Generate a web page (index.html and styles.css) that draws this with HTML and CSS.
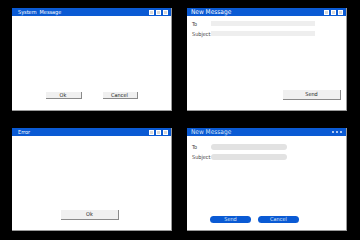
FILE: index.html
```html
<!DOCTYPE html>
<html>
<head>
<meta charset="utf-8">
<link rel="stylesheet" href="styles.css">
</head>
<body>
<div class="grid">
  <div class="win">
    <div class="title"><span class="t">System&nbsp; Message</span><span class="ctl"><i></i><i></i><i></i></span></div>
    <div class="body center-bottom">
      <div class="btnrow">
        <button class="btn w36">Ok</button>
        <button class="btn w35">Cancel</button>
      </div>
    </div>
  </div>
  <div class="win">
    <div class="title"><span class="t big">New Message</span><span class="ctl"><i></i><i></i><i></i></span></div>
    <div class="body form">
      <div class="row"><span class="lbl">To</span><span class="inp"></span></div>
      <div class="row"><span class="lbl">Subject</span><span class="inp"></span></div>
      <div class="spacer"></div>
      <div class="right"><button class="btn send">Send</button></div>
    </div>
  </div>
  <div class="win">
    <div class="title"><span class="t">Error</span><span class="ctl"><i></i><i></i><i></i></span></div>
    <div class="body center-bottom err">
      <button class="btn okbig">Ok</button>
    </div>
  </div>
  <div class="win">
    <div class="title"><span class="t big light">New Message</span><span class="dots"><b></b><b></b><b></b></span></div>
    <div class="body form2">
      <div class="row2"><span class="lbl">To</span><span class="inp2"></span></div>
      <div class="row2"><span class="lbl">Subject</span><span class="inp2"></span></div>
      <div class="spacer"></div>
      <div class="pills"><button class="pill">Send</button><button class="pill">Cancel</button></div>
    </div>
  </div>
</div>
</body>
</html>
```
FILE: styles.css
```css
html, body { margin: 0; padding: 0; background: #000; }
body {
  width: 360px; height: 240px; overflow: hidden;
  font-family: "DejaVu Sans Condensed", sans-serif;
}
.grid {
  display: grid;
  grid-template-columns: 160px 160px;
  grid-template-rows: 103px 103px;
  column-gap: 15px;
  row-gap: 17px;
  padding: 8px 0 0 12px;
}
.win {
  background: #fff;
  display: flex;
  flex-direction: column;
  box-sizing: border-box;
  border-right: 1px solid #9a9a9a;
  border-bottom: 1px solid #9a9a9a;
}
.title {
  height: 8px;
  background: #0a5ad4;
  display: flex;
  align-items: center;
  justify-content: space-between;
  padding: 0 3px 0 6px;
}
.t { color: #fff; font-size: 5.5px; line-height: 8px; }
.t.big { font-size: 6.5px; }
.t.light { color: #dde6f5; }
.title .t.big { margin-left: -2px; }
.ctl { display: flex; gap: 2px; }
.ctl i {
  display: block; width: 3px; height: 3px;
  background: #d8d8d8; border: 0.5px solid #fff;
}
.dots { display: flex; gap: 2px; margin-right: 1px; }
.dots b { display: block; width: 2px; height: 2px; border-radius: 50%; background: #e8eef8; }
.body { flex: 1; display: flex; flex-direction: column; }
.center-bottom { justify-content: flex-end; align-items: center; padding-bottom: 11px; }
.btnrow { display: flex; gap: 21px; }
.btn {
  font-family: inherit; font-size: 5.5px; color: #222;
  background: #f0f0f0; border: none;
  border-right: 1px solid #8a8a8a; border-bottom: 1px solid #8a8a8a;
  padding: 0; margin: 0; height: 7px; line-height: 6px;
  box-sizing: border-box;
}
.w36 { width: 36px; }
.w35 { width: 35px; }
.err { padding-bottom: 10px; align-items: flex-start; padding-left: 49px; }
.okbig { width: 58px; height: 10px; line-height: 9px; }
.form { padding: 5px 5px 10px 5px; }
.row { display: flex; align-items: center; height: 5px; margin-bottom: 5px; }
.lbl { width: 19px; flex-shrink: 0; white-space: nowrap; font-size: 5.5px; color: #444; }
.inp { width: 104px; height: 5px; background: #eeeeee; }
.spacer { flex: 1; }
.right { display: flex; justify-content: flex-end; }
.send { width: 58px; height: 10px; line-height: 9px; }
.form2 { padding: 8px 5px 7px 5px; }
.row2 { display: flex; align-items: center; height: 6px; margin-bottom: 4px; }
.inp2 { width: 76px; height: 6px; background: #e2e2e2; border-radius: 3px; }
.pills { display: flex; gap: 7px; padding-left: 18px; }
.pill {
  width: 41px; height: 7px; border: none; border-radius: 4px; padding: 0;
  background: #0a5ad4; color: #dde6f5; font-family: inherit; font-size: 5.5px; line-height: 7px;
}
```
